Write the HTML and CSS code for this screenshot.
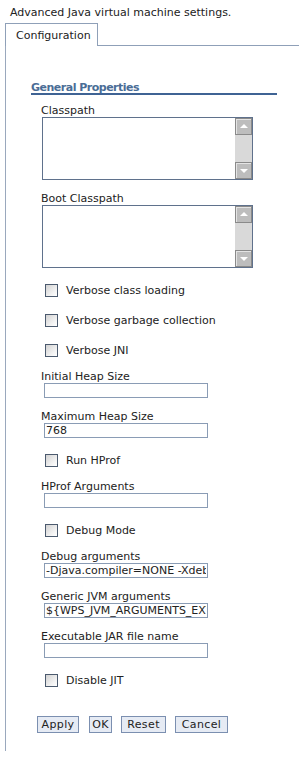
FILE: index.html
```html
<!DOCTYPE html>
<html lang="en">
<head>
  <meta charset="UTF-8">
  <meta name="viewport" content="width=device-width, initial-scale=1.0">
  <title>Java Virtual Machine</title>
  <link rel="stylesheet" href="styles.css">
</head>
<body>
  <p class="intro">Advanced Java virtual machine settings.</p>

  <div class="tabs">
    <div class="tab">Configuration</div>
    <div class="tab-fill"></div>
  </div>

  <div class="panel">
    <h2 class="section-title">General Properties</h2>

    <form class="fields">
      <label class="field-label">Classpath</label>
      <div class="textbox">
        <textarea></textarea>
        <div class="scroll">
          <span class="scroll-btn up"></span>
          <span class="scroll-track"></span>
          <span class="scroll-btn down"></span>
        </div>
      </div>

      <label class="field-label">Boot Classpath</label>
      <div class="textbox">
        <textarea></textarea>
        <div class="scroll">
          <span class="scroll-btn up"></span>
          <span class="scroll-track"></span>
          <span class="scroll-btn down"></span>
        </div>
      </div>

      <label class="check first"><input type="checkbox"> Verbose class loading</label>
      <label class="check"><input type="checkbox"> Verbose garbage collection</label>
      <label class="check"><input type="checkbox"> Verbose JNI</label>

      <label class="field-label after-check">Initial Heap Size</label>
      <input type="text" class="text-input">

      <label class="field-label">Maximum Heap Size</label>
      <input type="text" class="text-input" value="768">

      <label class="check first"><input type="checkbox"> Run HProf</label>

      <label class="field-label after-check">HProf Arguments</label>
      <input type="text" class="text-input">

      <label class="check first"><input type="checkbox"> Debug Mode</label>

      <label class="field-label after-check">Debug arguments</label>
      <input type="text" class="text-input" value="-Djava.compiler=NONE -Xdebug -Xnoagent -Xrunjdwp">

      <label class="field-label">Generic JVM arguments</label>
      <input type="text" class="text-input" value="${WPS_JVM_ARGUMENTS_EXT}">

      <label class="field-label">Executable JAR file name</label>
      <input type="text" class="text-input">

      <label class="check first"><input type="checkbox"> Disable JIT</label>
    </form>

    <div class="actions">
      <button type="button" class="btn btn-apply">Apply</button>
      <button type="button" class="btn btn-ok">OK</button>
      <button type="button" class="btn btn-reset">Reset</button>
      <button type="button" class="btn btn-cancel">Cancel</button>
    </div>
  </div>
</body>
</html>
```

FILE: styles.css
```css
body {
  margin: 0;
  font-family: "DejaVu Sans", Verdana, sans-serif;
  font-size: 11px;
  color: #222;
  background: #fff;
}
.intro {
  margin: 0;
  padding: 6px 0 0 10px;
  line-height: 13px;
}
.tabs {
  display: flex;
  margin: 4px 0 0 5px;
}
.tab {
  width: 81px;
  height: 22px;
  padding-left: 10px;
  line-height: 24px;
  border: 1px solid #8fa0b8;
  border-bottom: none;
}
.tab-fill {
  flex: 1;
  border-bottom: 1px solid #8fa0b8;
}
.panel {
  margin-left: 5px;
  height: 705px;
  border-left: 1px solid #9aa8bd;
  padding-left: 25px;
}
.section-title {
  width: 246px;
  margin: 0;
  padding-top: 36px;
  font-size: 11px;
  line-height: 11px;
  letter-spacing: -0.5px;
  color: #4a6d96;
  border-bottom: 2px solid #3f6394;
}
.fields {
  display: flex;
  flex-direction: column;
  align-items: flex-start;
  padding-left: 10px;
}
.field-label {
  display: block;
  margin-top: 12px;
  line-height: 13px;
}
.field-label.after-check {
  margin-top: 13px;
}
.fields .field-label:first-child {
  margin-top: 9px;
}
.textbox {
  display: flex;
  width: 209px;
  height: 61px;
  margin-left: 1px;
  border: 1px solid #5f718c;
  background: #fff;
}
.textbox textarea {
  flex: 1;
  border: none;
  resize: none;
  outline: none;
  padding: 2px;
  font: inherit;
}
.scroll {
  display: flex;
  flex-direction: column;
  width: 17px;
  background: #d9d9d9;
}
.scroll-btn {
  position: relative;
  height: 15px;
  background: #bdbdbd;
  border: 1px solid #8a8a8a;
  box-shadow: inset 1px 1px 0 #e4e4e4;
}
.scroll-btn::after {
  content: "";
  position: absolute;
  left: 4px;
  border-left: 4px solid transparent;
  border-right: 4px solid transparent;
}
.scroll-btn.up::after {
  top: 5px;
  border-bottom: 4px solid #fff;
}
.scroll-btn.down::after {
  top: 6px;
  border-top: 4px solid #fff;
}
.scroll-track {
  flex: 1;
}
.check {
  display: flex;
  align-items: center;
  gap: 8px;
  height: 13px;
  margin: 17px 0 0 4px;
  line-height: 13px;
}
.check.first {
  margin-top: 16px;
}
.check input {
  -webkit-appearance: none;
  appearance: none;
  width: 13px;
  height: 13px;
  margin: 0;
  border: 1px solid #4b5a6e;
  background: linear-gradient(135deg, #d2d2d2, #f4f4f4 70%, #fff);
}
.text-input {
  box-sizing: border-box;
  width: 164px;
  height: 15px;
  margin-left: 3px;
  padding: 0 1px;
  border: 1px solid #8a9cb5;
  font: inherit;
  color: #222;
}
.actions {
  display: flex;
  gap: 9px;
  margin: 29px 0 0 6px;
}
.btn {
  height: 17px;
  padding: 0;
  border: 1px solid #7b8fb0;
  background: #e6ebf4;
  font: inherit;
  letter-spacing: 0.4px;
  color: #222;
  line-height: 15px;
  text-align: center;
}
.btn-apply {
  width: 42px;
}
.btn-ok {
  width: 23px;
  margin-left: 1px;
}
.btn-reset {
  width: 45px;
}
.btn-cancel {
  width: 53px;
}
```
